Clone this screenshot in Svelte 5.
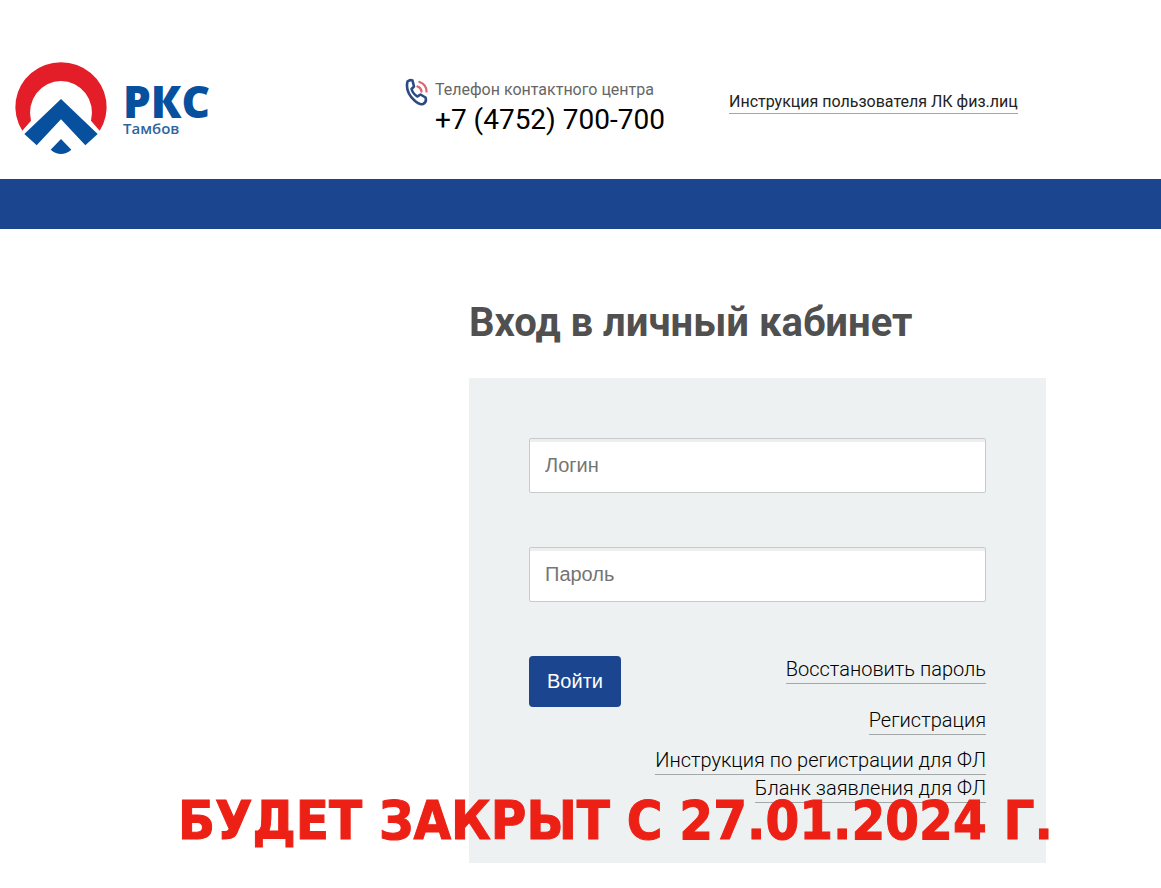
<script lang="ts">
  let login = $state('');
  let password = $state('');

  const documents = ['Инструкция по регистрации для ФЛ', 'Бланк заявления для ФЛ'];
</script>

<div class="page">
  <header>
    <a class="logo" href="#home" aria-label="РКС Тамбов">
      <svg viewBox="45 39 279 279" width="93" height="93" aria-hidden="true">
        <path d="M67 242A137 134 0 1 1 299 242L273 212A93 95 0 1 0 93 212Z" fill="#e31e28" />
        <path d="M183 147L293 252L256 286L183 208L110 286L73 252Z" fill="#07509e" />
        <path d="M183 267L214 299Q183 325 152 299Z" fill="#07509e" />
      </svg>
      <span class="brand">
        <strong>РКС</strong>
        <span class="city">Тамбов</span>
      </span>
    </a>

    <div class="contact">
      <svg viewBox="0 0 24 28" width="24" height="28" fill="none" stroke-linecap="round" stroke-linejoin="round" aria-hidden="true">
        <path d="M2.5 3.5Q5 1.5 7.5 2.5L9 8.5L6.5 11Q8 16 12.5 18.5L15.5 16.5L20.5 19.5Q22 24 18 26Q14.5 27 9.5 22.5Q0 14 2.5 3.5Z" stroke="#2c4b83" stroke-width="2.6" />
        <path d="M12.5 8.5Q16 9.5 16.5 13.5M14.5 4Q21.5 6.5 21.5 13.5" stroke="#dc6672" stroke-width="2.3" />
      </svg>
      <div>
        <p>Телефон контактного центра</p>
        <a class="phone" href="tel:+74752700700">+7 (4752) 700-700</a>
      </div>
    </div>

    <a class="line guide" href="#guide">Инструкция пользователя ЛК физ.лиц</a>
  </header>

  <div class="bar"></div>

  <main>
    <h1>Вход в личный кабинет</h1>
    <form onsubmit={(e) => e.preventDefault()}>
      <input type="text" aria-label="Логин" placeholder="Логин" bind:value={login} />
      <input type="password" aria-label="Пароль" placeholder="Пароль" bind:value={password} />
      <div class="actions">
        <button type="submit">Войти</button>
        <nav>
          <a class="line" href="#restore">Восстановить пароль</a>
          <a class="line register" href="#register">Регистрация</a>
          {#each documents as title}
            <a class="line" href="#document">{title}</a>
          {/each}
        </nav>
      </div>
    </form>
  </main>

  <strong class="notice">БУДЕТ ЗАКРЫТ С 27.01.2024 Г.</strong>
</div>

<style>
  :global(body) {
    margin: 0;
    background: #fff;
  }
  .page {
    position: relative;
    min-height: 100vh;
    overflow: hidden;
    font-family: Roboto, sans-serif;
    color: #111;
  }
  header {
    display: grid;
    grid-template-columns: 390px 324px 1fr;
    padding: 62px 15px 22px;
  }
  .logo {
    display: flex;
    gap: 15px;
    height: 95px;
    text-decoration: none;
    color: #07509e;
  }
  .logo svg {
    margin-top: 1px;
    overflow: visible;
  }
  .brand {
    display: flex;
    flex-direction: column;
    padding-top: 19px;
    font-family: "Open Sans", sans-serif;
  }
  .brand strong {
    font-size: 44px;
    line-height: 40px;
    font-weight: 800;
  }
  .city {
    font-size: 15px;
    line-height: 14px;
    font-weight: 600;
    color: #2d659f;
  }
  .contact {
    display: flex;
    align-items: flex-start;
    gap: 6px;
    padding-top: 16px;
  }
  .contact p {
    margin: 0;
    font-size: 16px;
    line-height: 24px;
    color: #666;
  }
  .phone {
    display: block;
    font-size: 28px;
    line-height: 36px;
    color: #000;
    text-decoration: none;
    white-space: nowrap;
  }
  .line {
    color: #000;
    text-decoration: none;
    border-bottom: 1px solid #a3a7a8;
    font-size: 20px;
    line-height: 27px;
    font-weight: 300;
    white-space: nowrap;
  }
  .line.guide {
    justify-self: start;
    align-self: start;
    margin-top: 28px;
    font-size: 16px;
    line-height: 23px;
    font-weight: 400;
    color: #222;
  }
  .bar {
    height: 50px;
    background: #1b468f;
  }
  main {
    margin: 69px 115px 0 469px;
  }
  h1 {
    margin: 0;
    font-size: 40px;
    line-height: 50px;
    font-weight: 700;
    color: #505050;
    white-space: nowrap;
  }
  form {
    display: flex;
    flex-direction: column;
    gap: 54px;
    margin-top: 30px;
    padding: 60px;
    background: #edf1f1;
  }
  input {
    box-sizing: border-box;
    width: 100%;
    height: 55px;
    padding: 0 15px;
    border: 1px solid #c8cbcb;
    border-radius: 2px;
    box-shadow: inset 0 3px 0 #eee;
    background: #fff;
    font: 20px "Liberation Sans", sans-serif;
    color: #222;
  }
  input::placeholder {
    color: #757575;
  }
  .actions {
    display: flex;
    justify-content: space-between;
    align-items: flex-start;
  }
  button {
    height: 51px;
    padding: 0 18px;
    border: 0;
    border-radius: 4px;
    background: #1b468f;
    color: #fff;
    font: 20px "Liberation Sans", sans-serif;
  }
  nav {
    display: flex;
    flex-direction: column;
    align-items: flex-end;
  }
  .register {
    margin: 23px 0 12px;
  }
  .notice {
    position: absolute;
    left: 178px;
    top: 786px;
    font-family: "DejaVu Sans Condensed", "DejaVu Sans", sans-serif;
    font-size: 54px;
    line-height: 70px;
    font-weight: 700;
    color: #ed2015;
    -webkit-text-stroke: 1px #ed2015;
    white-space: nowrap;
  }
</style>
